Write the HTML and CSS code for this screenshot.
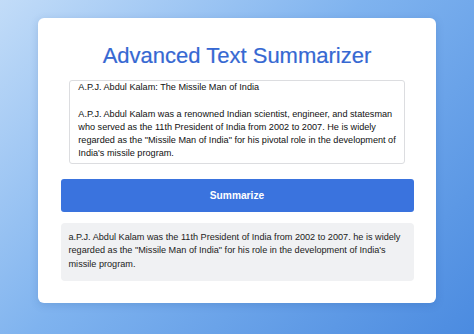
FILE: index.html
```html
<!DOCTYPE html>
<html lang="en">
<head>
<meta charset="utf-8">
<title>Advanced Text Summarizer</title>
<link rel="stylesheet" href="styles.css">
</head>
<body>
<main class="card">
  <h1 class="title">Advanced Text Summarizer</h1>
  <textarea class="input" spellcheck="false">A.P.J. Abdul Kalam: The Missile Man of India

A.P.J. Abdul Kalam was a renowned Indian scientist, engineer, and statesman who served as the 11th President of India from 2002 to 2007. He is widely regarded as the "Missile Man of India" for his pivotal role in the development of India's missile program.</textarea>
  <button class="btn" type="button">Summarize</button>
  <div class="summary">a.P.J. Abdul Kalam was the 11th President of India from 2002 to 2007. he is widely regarded as the "Missile Man of India" for his role in the development of India's missile program.</div>
</main>
</body>
</html>
```
FILE: styles.css
```css
* { box-sizing: border-box; }
html, body { margin: 0; height: 100%; }
body {
  width: 474px;
  height: 334px;
  overflow: hidden;
  font-family: "Liberation Sans", Arial, sans-serif;
  background: linear-gradient(135deg, #c2dcf8 0%, #7fb3ef 45%, #4b8be0 100%);
  padding-top: 18px;
}
.card {
  width: 398px;
  height: 285px;
  margin: 0 auto;
  background: #fff;
  border-radius: 6px;
  padding: 25px 22.5px 0;
  box-shadow: 0 2px 8px rgba(30, 70, 140, 0.18);
}
.title {
  margin: 0 0 11px;
  font-size: 22px;
  line-height: 26px;
  font-weight: 400;
  text-align: center;
  color: #3668d2;
  -webkit-text-stroke: 0.2px #3668d2;
}
.input {
  display: block;
  width: 95%;
  height: 84px;
  margin: 0 auto;
  padding: 0 4px 3px 8px;
  border: 1px solid #dcdde0;
  border-radius: 3px;
  font-family: "Liberation Sans", Arial, sans-serif;
  font-size: 9.15px;
  line-height: 13.3px;
  color: #111;
  resize: none;
  overflow: hidden;
  background: #fff;
}
.btn {
  display: block;
  width: 100%;
  height: 32.5px;
  margin-top: 15px;
  border: none;
  border-radius: 3px;
  background: #3a73de;
  color: #fff;
  font-family: "Liberation Sans", Arial, sans-serif;
  font-size: 10.2px;
  font-weight: 700;
}
.summary {
  margin-top: 11.5px;
  padding: 7.5px 4px 9.8px 8px;
  background: #f0f1f3;
  border-radius: 4px;
  font-size: 9.15px;
  line-height: 13.7px;
  color: #222;
}
```
